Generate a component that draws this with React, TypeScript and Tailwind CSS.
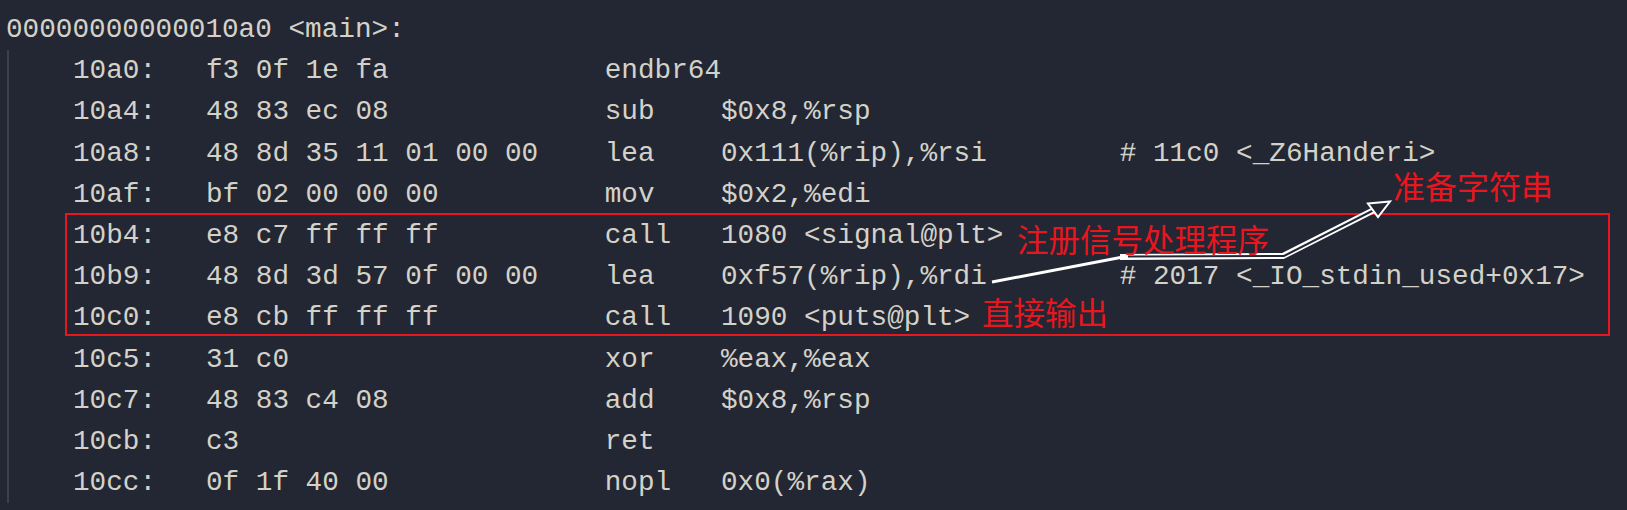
const rows: [string, string, string, string, string?][] = [
  ['10a0:', 'f3 0f 1e fa', 'endbr64', ''],
  ['10a4:', '48 83 ec 08', 'sub', '$0x8,%rsp'],
  ['10a8:', '48 8d 35 11 01 00 00', 'lea', '0x111(%rip),%rsi', '# 11c0 <_Z6Handeri>'],
  ['10af:', 'bf 02 00 00 00', 'mov', '$0x2,%edi'],
  ['10b4:', 'e8 c7 ff ff ff', 'call', '1080 <signal@plt>'],
  ['10b9:', '48 8d 3d 57 0f 00 00', 'lea', '0xf57(%rip),%rdi', '# 2017 <_IO_stdin_used+0x17>'],
  ['10c0:', 'e8 cb ff ff ff', 'call', '1090 <puts@plt>'],
  ['10c5:', '31 c0', 'xor', '%eax,%eax'],
  ['10c7:', '48 83 c4 08', 'add', '$0x8,%rsp'],
  ['10cb:', 'c3', 'ret', ''],
  ['10cc:', '0f 1f 40 00', 'nopl', '0x0(%rax)'],
];

function line(r: [string, string, string, string, string?]) {
  const [addr, bytes, mn, op, comment] = r;
  let s = addr.padEnd(8) + bytes.padEnd(24) + (op ? mn.padEnd(7) + op : mn);
  if (comment) s = s.padEnd(63) + comment;
  return s;
}

export default function App() {
  return (
    <div className="relative w-[1627px] h-[510px] overflow-hidden bg-[#232733] pt-[9px] pl-[6px] font-['Liberation_Mono',monospace] text-[27.7px] leading-[41.2px] text-[#d4d2c8]">
      <div className="whitespace-pre">{'00000000000010a0 <main>:'}</div>
      <div className="ml-[1px] border-l-2 border-[#3c404b] pl-[64px]">
        {rows.map((r) => (
          <div key={r[0]} className="whitespace-pre">
            {line(r)}
          </div>
        ))}
      </div>

      {/* annotations drawn over the listing */}
      <div className="absolute left-[65px] top-[213px] w-[1545px] h-[123px] border-2 border-[#e8161f]" />

      <svg className="absolute inset-0 pointer-events-none" width="1627" height="510">
        <path d="M992 282 L1123 257" stroke="#ffffff" strokeWidth="3" fill="none" />
        <path d="M1120 257 L1283 256 L1378 208" stroke="#ffffff" strokeWidth="6" fill="none" strokeLinejoin="miter" />
        <path d="M1128 256.5 L1284 256 L1374 210" stroke="#232733" strokeWidth="2" fill="none" strokeLinejoin="miter" />
        <polygon points="1368,203.5 1390,201.5 1378,217" fill="#232733" stroke="#ffffff" strokeWidth="2" strokeLinejoin="miter" />
      </svg>

      <div className="absolute left-[1393px] top-[169px] font-['Noto_Sans_CJK_SC',sans-serif] text-[32px] leading-[32px] text-[#e8161f]">
        准备字符串
      </div>
      <div className="absolute left-[1017px] top-[222px] font-['Noto_Sans_CJK_SC',sans-serif] text-[31.5px] leading-[32px] text-[#e8161f]">
        注册信号处理程序
      </div>
      <div className="absolute left-[982px] top-[295px] font-['Noto_Sans_CJK_SC',sans-serif] text-[31.5px] leading-[32px] text-[#e8161f]">
        直接输出
      </div>
    </div>
  );
}
